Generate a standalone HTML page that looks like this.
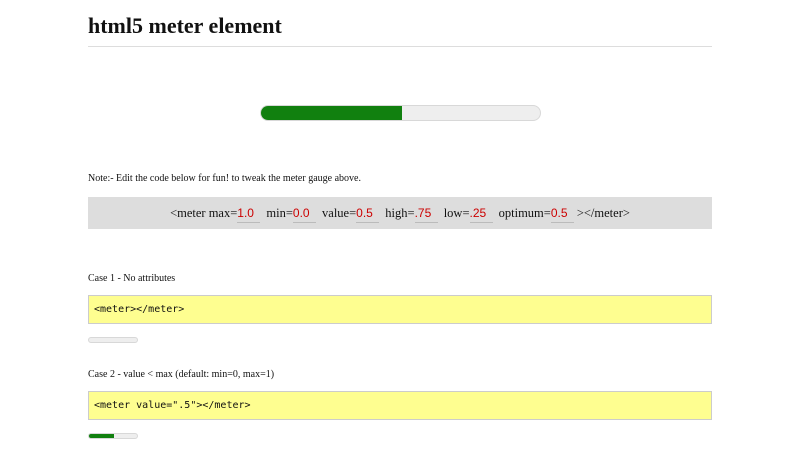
<!DOCTYPE html>
<html><head><style>
body{margin:0;background:#fff;font-family:"Liberation Serif",serif;color:#111;}
.w{position:absolute;left:88px;width:624px;}
h1{position:absolute;left:88px;top:13px;margin:0;font-size:22px;font-weight:bold;}
.hr{position:absolute;left:88px;top:46px;width:624px;height:1px;background:#ddd;}
.m{position:absolute;background:#eee;border:1px solid #d8d8d8;border-radius:8px;overflow:hidden;box-sizing:border-box}
.m i{display:block;height:100%;background:#11800f;}
.t{position:absolute;left:88px;font-size:10px;}
.gray{top:197px;height:32px;background:#ddd;text-align:center;line-height:33px;font-size:12.5px;}
.gray span{display:inline-block;color:#c00;font-family:"Liberation Sans",sans-serif;font-size:12px;border-bottom:1px solid #bbb;line-height:18px;width:23px;text-align:left;margin-right:3px}
.y{background:#fefe90;border:1px solid #ccc;box-sizing:border-box;font-family:"DejaVu Sans Mono",monospace;font-size:10px;padding-left:5px;}
</style></head><body>
<h1>html5 meter element</h1>
<div class="hr"></div>
<div class="m" style="left:260px;top:105px;width:281px;height:16px"><i style="width:141px"></i></div>
<div class="t" style="top:173px">Note:- Edit the code below for fun! to tweak the meter gauge above.</div>
<div class="w gray">&lt;meter max=<span>1.0</span> min=<span>0.0</span> value=<span>0.5</span> high=<span>.75</span> low=<span>.25</span> optimum=<span>0.5</span>&gt;&lt;/meter&gt;</div>
<div class="t" style="top:273px">Case 1 - No attributes</div>
<div class="w y" style="top:295px;height:29px;line-height:27px">&lt;meter&gt;&lt;/meter&gt;</div>
<div class="m" style="left:88px;top:337px;width:50px;height:6px"><i style="width:0"></i></div>
<div class="t" style="top:369px">Case 2 - value &lt; max (default: min=0, max=1)</div>
<div class="w y" style="top:391px;height:29px;line-height:27px">&lt;meter value=".5"&gt;&lt;/meter&gt;</div>
<div class="m" style="left:88px;top:433px;width:50px;height:6px"><i style="width:25px"></i></div>
</body></html>
